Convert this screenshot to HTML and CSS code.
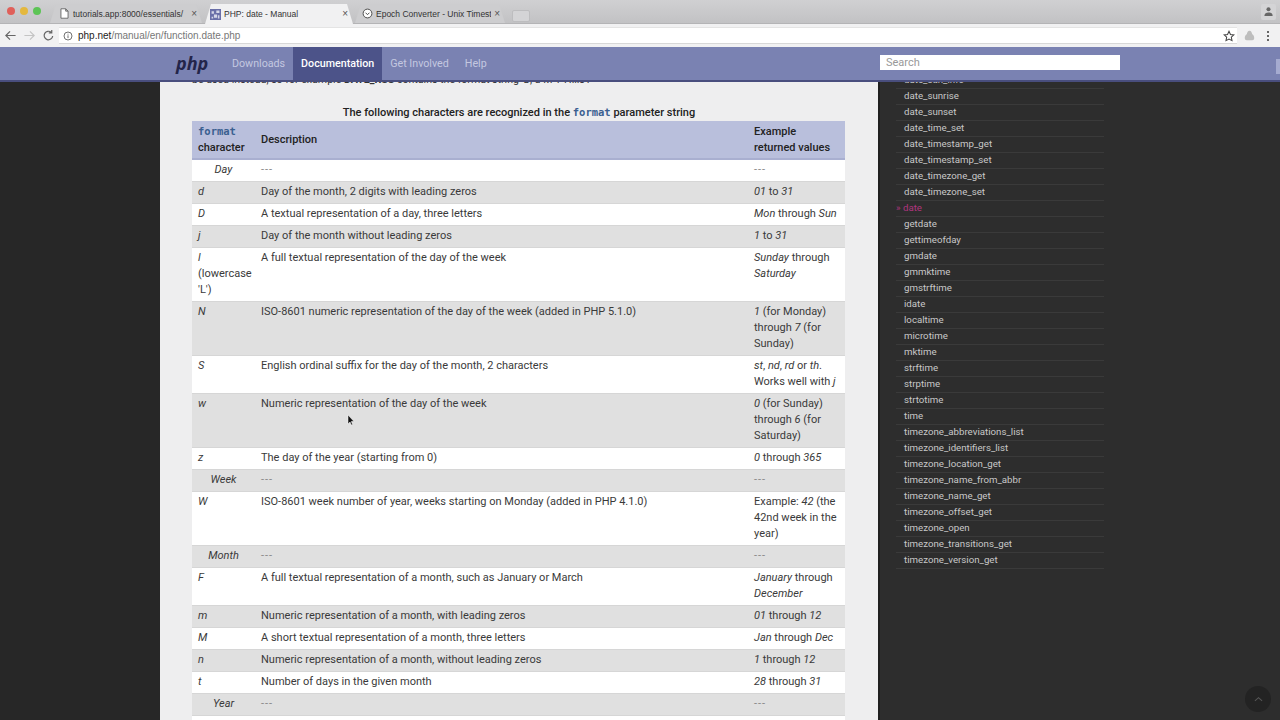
FILE: index.html
```html
<!DOCTYPE html>
<html lang="en">
<head>
<meta charset="utf-8">
<title>PHP: date - Manual</title>
<link rel="stylesheet" href="styles.css">
</head>
<body>
<div class="tabstrip">
  <div class="lights"><i class="red"></i><i class="yellow"></i><i class="green"></i></div>
  <div class="tab first">
    <svg class="favicon" viewBox="0 0 12 14"><path d="M1.500 1h6l3 3v9h-9z M7.500 1v3h3" fill="#fff" stroke="#555" stroke-width="1"/></svg>
    <span class="tab-title">tutorials.app:8000/essentials/</span><span class="tab-x">×</span>
  </div>
  <div class="tab active">
    <svg class="favicon" viewBox="0 0 14 14"><rect width="14" height="14" fill="#6a6fa8"/><path d="M2 3h3v3H2zM8 2h4v3H8zM5 7h4v4H5zM2 10h2v2H2zM10 8h2v4h-2z" fill="#d5d7e8"/></svg>
    <span class="tab-title">PHP: date - Manual</span><span class="tab-x">×</span>
  </div>
  <div class="tab third">
    <svg class="favicon" viewBox="0 0 14 14"><circle cx="7" cy="7" r="5.600" fill="#fff" stroke="#444" stroke-width="1.200"/><path d="M4.500 6l2.500 2.500L9.500 6" fill="none" stroke="#444" stroke-width="1.200"/></svg>
    <span class="tab-title">Epoch Converter - Unix Timest</span><span class="tab-x">×</span>
  </div>
  <div class="new-tab"></div>
  <div class="profile"><svg viewBox="0 0 12 12"><circle cx="6" cy="3.500" r="2.200" fill="#666"/><path d="M1.500 11c0-3 2-4 4.500-4s4.500 1 4.500 4z" fill="#666"/></svg></div>
</div>
<div class="toolbar">
  <svg class="nav-icon" viewBox="0 0 14 14"><path d="M12.500 7H2M6.500 2.500L2 7l4.500 4.500" fill="none" stroke="#666" stroke-width="1.300"/></svg>
  <svg class="nav-icon" viewBox="0 0 14 14"><path d="M1.500 7H12M7.500 2.500L12 7l-4.500 4.500" fill="none" stroke="#c4c4c4" stroke-width="1.300"/></svg>
  <svg class="nav-icon" viewBox="0 0 14 14"><path d="M11.500 7.500A4.600 4.600 0 1 1 10 3.600M10.500 1v3.200H7.300" fill="none" stroke="#666" stroke-width="1.300"/></svg>
  <div class="omnibox">
    <svg class="info" viewBox="0 0 12 12"><circle cx="6" cy="6" r="4.800" fill="none" stroke="#555"/><path d="M6 5.200v3.300M6 3.300v1" stroke="#555"/></svg>
    <span class="host">php.net</span><span class="path">/manual/en/function.date.php</span>
    <svg class="star" viewBox="0 0 14 14"><path d="M7 1.500l1.700 3.700 4 .5-3 2.700.8 4L7 10.500l-3.500 1.900.8-4-3-2.700 4-.5z" fill="none" stroke="#444" stroke-width="1.200"/></svg>
  </div>
  <svg class="ext" viewBox="0 0 14 14"><path d="M7 1c2 0 3 2 3.500 4.500C12.500 6.500 13 8.500 13 10.500c0 1.500-1 2.500-2.500 2.500h-7C2 13 1 12 1 10.500c0-2 .5-4 2.500-5C4 3 5 1 7 1z" fill="#bdbdbd"/></svg>
  <div class="menu-dots"><i></i><i></i><i></i></div>
</div>
<header class="phpnav">
  <span class="logo">php</span>
  <nav class="links">
    <a>Downloads</a>
    <a class="current">Documentation</a>
    <a>Get Involved</a>
    <a>Help</a>
  </nav>
  <div class="search">Search</div>
  <div class="edge"></div>
</header>
<div class="viewport">
  <main class="content">
    <p class="clipped">be used instead, so for example <b>DATE_RSS</b> contains the format string 'D, d M Y H:i:s'.</p>
    <p class="caption">The following characters are recognized in the <code>format</code> parameter string</p>
    <table class="formats">
      <thead>
        <tr><th class="c1"><code>format</code><br>character</th><th class="c2">Description</th><th class="c3">Example returned values</th></tr>
      </thead>
      <tbody>
        <tr><td class="c1"><em>Day</em></td><td class="dash">---</td><td class="dash">---</td></tr>
        <tr><td><em>d</em></td><td>Day of the month, 2 digits with leading zeros</td><td><em>01</em> to <em>31</em></td></tr>
        <tr><td><em>D</em></td><td>A textual representation of a day, three letters</td><td><em>Mon</em> through <em>Sun</em></td></tr>
        <tr><td><em>j</em></td><td>Day of the month without leading zeros</td><td><em>1</em> to <em>31</em></td></tr>
        <tr><td><em>l</em> (lowercase 'L')</td><td>A full textual representation of the day of the week</td><td><em>Sunday</em> through <em>Saturday</em></td></tr>
        <tr><td><em>N</em></td><td>ISO-8601 numeric representation of the day of the week (added in PHP 5.1.0)</td><td><em>1</em> (for Monday) through <em>7</em> (for Sunday)</td></tr>
        <tr><td><em>S</em></td><td>English ordinal suffix for the day of the month, 2 characters</td><td><em>st</em>, <em>nd</em>, <em>rd</em> or <em>th</em>. Works well with <em>j</em></td></tr>
        <tr><td><em>w</em></td><td>Numeric representation of the day of the week</td><td><em>0</em> (for Sunday) through <em>6</em> (for Saturday)</td></tr>
        <tr><td><em>z</em></td><td>The day of the year (starting from 0)</td><td><em>0</em> through <em>365</em></td></tr>
        <tr><td class="c1"><em>Week</em></td><td class="dash">---</td><td class="dash">---</td></tr>
        <tr><td><em>W</em></td><td>ISO-8601 week number of year, weeks starting on Monday (added in PHP 4.1.0)</td><td>Example: <em>42</em> (the 42nd week in the year)</td></tr>
        <tr><td class="c1"><em>Month</em></td><td class="dash">---</td><td class="dash">---</td></tr>
        <tr><td><em>F</em></td><td>A full textual representation of a month, such as January or March</td><td><em>January</em> through <em>December</em></td></tr>
        <tr><td><em>m</em></td><td>Numeric representation of a month, with leading zeros</td><td><em>01</em> through <em>12</em></td></tr>
        <tr><td><em>M</em></td><td>A short textual representation of a month, three letters</td><td><em>Jan</em> through <em>Dec</em></td></tr>
        <tr><td><em>n</em></td><td>Numeric representation of a month, without leading zeros</td><td><em>1</em> through <em>12</em></td></tr>
        <tr><td><em>t</em></td><td>Number of days in the given month</td><td><em>28</em> through <em>31</em></td></tr>
        <tr><td class="c1"><em>Year</em></td><td class="dash">---</td><td class="dash">---</td></tr>
      </tbody>
    </table>
    <div class="next-row"></div>
    <svg class="cursor" viewBox="0 0 8 12"><path d="M1 0v9l2-2 1.300 3 1.300-.6L4.300 6.500H7z" fill="#111" stroke="#fff" stroke-width=".5"/></svg>
  </main>
  <aside class="side">
    <ul>
      <li>date_sun_info</li><li>date_sunrise</li><li>date_sunset</li><li>date_time_set</li><li>date_timestamp_get</li><li>date_timestamp_set</li><li>date_timezone_get</li><li>date_timezone_set</li><li class="here">date</li><li>getdate</li><li>gettimeofday</li><li>gmdate</li><li>gmmktime</li><li>gmstrftime</li><li>idate</li><li>localtime</li><li>microtime</li><li>mktime</li><li>strftime</li><li>strptime</li><li>strtotime</li><li>time</li><li>timezone_abbreviations_list</li><li>timezone_identifiers_list</li><li>timezone_location_get</li><li>timezone_name_from_abbr</li><li>timezone_name_get</li><li>timezone_offset_get</li><li>timezone_open</li><li>timezone_transitions_get</li><li>timezone_version_get</li>
    </ul>
    <div class="totop"><svg viewBox="0 0 10 6"><path d="M1 5l4-3.500L9 5" fill="none" stroke="#555" stroke-width="1.200"/></svg></div>
  </aside>
</div>
</body>
</html>
```
FILE: styles.css
```css
* { box-sizing: border-box; }
html, body { margin: 0; height: 100%; overflow: hidden; }
body { width: 1280px; height: 720px; display: flex; flex-direction: column; background: #2b2b2b; font-family: Roboto, "Open Sans", sans-serif; color: #333; }

.tabstrip { height: 24px; flex: none; display: flex; align-items: flex-end; background: linear-gradient(#d0d0d2, #c2c2c4); padding-left: 7px; border-bottom: 1px solid #b4b4b6; }
.lights { display: flex; gap: 5px; width: 43px; align-self: center; margin-bottom: 2px; }
.lights i { width: 8px; height: 8px; border-radius: 50%; }
.red { background: #e0605a; }
.yellow { background: #e4b83e; }
.green { background: #5cc455; }
.tab { height: 19px; display: flex; align-items: center; gap: 3px; padding: 0 5px 0 9px; background: #cdcdcf; clip-path: polygon(6px 0, calc(100% - 6px) 0, 100% 100%, 0 100%); font: 8.500px/12px "Liberation Sans", sans-serif; color: #333; }
.tab.first { width: 152px; margin-right: 3px; }
.tab.active { width: 148px; margin-right: 2px; background: #f1f1f2; padding-left: 5px; height: 20px; margin-bottom: -1px; }
.tab.third { width: 150px; margin-right: 7px; padding-left: 7px; }
.tab-title { flex: 1; overflow: hidden; white-space: nowrap; }
.tab-x { color: #555; font-size: 10px; }
.favicon { width: 11px; height: 11px; flex: none; }
.new-tab { width: 18px; height: 12px; margin-bottom: 1px; background: #d4d4d6; border: 1px solid #bdbdbf; border-radius: 2px; }
.profile { margin-left: auto; margin-right: 4px; align-self: flex-start; margin-top: 4px; width: 15px; height: 16px; padding: 2px; background: #d4d4d6; border-radius: 2px; }
.profile svg { display: block; }

.toolbar { height: 23px; flex: none; display: flex; align-items: center; background: #f1f1f2; padding-left: 4px; }
.nav-icon { width: 13px; height: 13px; margin-right: 6px; flex: none; }
.omnibox { width: 1178px; height: 17px; margin-left: -2px; display: flex; align-items: center; background: #fff; border-top: 1px solid #e4e4e4; border-bottom: 1px solid #d8d8d8; padding: 0 2px 0 4px; font: 10px/15px "Liberation Sans", sans-serif; }
.info { width: 10px; height: 10px; margin-right: 5px; }
.host { color: #222; }
.path { color: #777; flex: 1; }
.star { width: 12px; height: 12px; }
.ext { width: 11px; height: 11px; margin-left: 7px; }
.menu-dots { display: flex; flex-direction: column; gap: 2px; margin-left: 12px; }
.menu-dots i { width: 2px; height: 2px; background: #666; }

.phpnav { height: 35px; flex: none; display: flex; align-items: stretch; background: #7a82b2; border-bottom: 2px solid #494e7e; padding-left: 176px; position: relative; z-index: 2; font-size: 10.700px; }
.logo { font: italic 700 18px/33px "Open Sans", sans-serif; color: #23254a; width: 48px; }
.links { display: flex; }
.links a { display: flex; align-items: center; padding: 0 8px; color: #c4c8e0; }
.links a.current { background: #4c5389; color: #fff; font-weight: 500; }
.search { position: absolute; left: 880px; top: 8px; width: 240px; height: 15px; padding-left: 6px; background: #fff; color: #999; font-size: 11px; line-height: 15px; }
.edge { position: absolute; right: 0; top: 12px; width: 4px; height: 15px; background: #a5abd0; }

.viewport { flex: 1; min-height: 0; display: flex; overflow: hidden; background: linear-gradient(90deg, #272727 160px, #2d2d2d 160px); }
.content { width: 720px; margin-left: 160px; flex: none; background: #eeeeef; padding: 0 32px; border-right: 2px solid #1f1f1f; position: relative; font-size: 11px; line-height: 16px; }
.clipped { margin: -10px 0 0; height: 16px; white-space: nowrap; color: #333; font-size: 10.600px; }
.caption { margin: 16px 0 0; height: 17px; text-align: center; font-weight: 500; color: #222; }
code { font-family: "DejaVu Sans Mono", monospace; font-weight: 700; color: #3b6090; font-size: 10.500px; }
.formats { width: 653px; border-collapse: separate; border-spacing: 0; table-layout: fixed; }
.formats th { text-align: left; background: #b9bfdc; padding: 2px 6px; font-weight: 500; vertical-align: middle; border-bottom: 2px solid #a9afd0; color: #222; }
.formats td { padding: 2px 6px 3px; vertical-align: top; background: #fff; border-bottom: 1px solid #d6d6d6; color: #3a3a3a; }
.formats tbody tr:nth-child(even) td { background: #e0e0e0; }
.formats td.dash { color: #888; letter-spacing: 1px; font-variant-ligatures: none; }
th.c1 { width: 63px; }
th.c3 { width: 97px; }
td.c1 { text-align: center; }
.next-row { width: 653px; height: 10px; background: #fff; }
.cursor { position: absolute; left: 187px; top: 333px; width: 8px; height: 12px; }

.side { flex: 1; position: relative; padding: 0 0 0 16px; font-size: 9.700px; }
.side ul { list-style: none; margin: -9px 0 0; padding: 0; width: 208px; }
.side li { height: 16px; line-height: 14px; padding-left: 8px; border-bottom: 1px solid #3a3a3a; color: #c8c8c8; }
.side li.here { color: #b0357f; padding-left: 0; }
.side li.here::before { content: "» "; }
.totop { position: absolute; right: 9px; bottom: 8px; width: 26px; height: 26px; border-radius: 50%; background: #232323; display: flex; align-items: center; justify-content: center; }
.totop svg { width: 9px; height: 6px; }
```
